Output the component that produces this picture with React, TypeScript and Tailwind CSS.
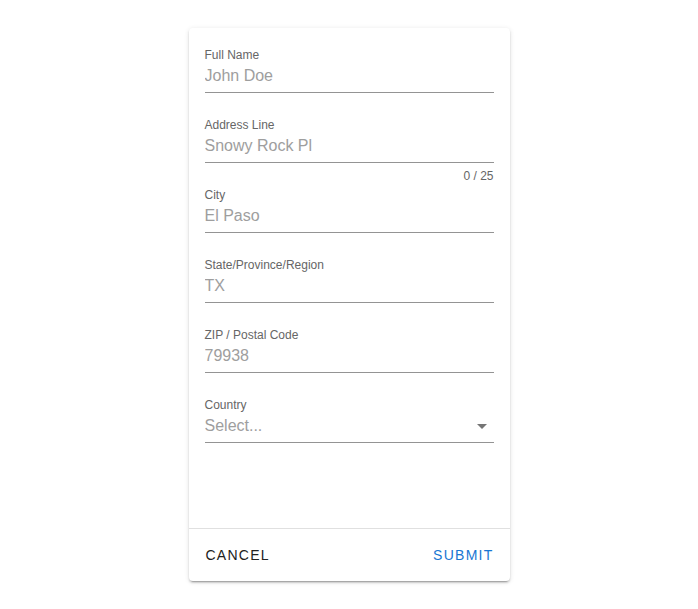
import React from "react";

function Field({ label, placeholder, counter, select }: { label: string; placeholder: string; counter?: string; select?: boolean }) {
  return (
    <div className="flex flex-col">
      <div className="h-[16px] text-[12px] leading-[18px] text-[#666666]">{label}</div>
      <div className="flex h-[31px] items-start border-b border-[#949494]">
        <input
          readOnly
          placeholder={placeholder}
          className="h-[28px] w-full min-w-0 flex-1 bg-transparent text-[16px] leading-[28px] text-[#212121] outline-none placeholder:text-[#9e9e9e]"
        />
        {select && (
          <svg width="24" height="24" viewBox="0 0 24 24" className="mt-[2px] shrink-0">
            <path d="M7,10L12,15L17,10H7Z" fill="#757575" />
          </svg>
        )}
      </div>
      <div className="flex h-[23px] justify-end">
        {counter && <div className="mt-[6px] text-[12px] leading-[14px] text-[#666666]">{counter}</div>}
      </div>
    </div>
  );
}

export default function App() {
  return (
    <div className="min-h-screen bg-white pt-[28px]" style={{ fontFamily: "'Liberation Sans', Arial, sans-serif" }}>
      <div className="mx-auto w-[321px] rounded-[4px] bg-white shadow-[0_3px_1px_-2px_rgba(0,0,0,0.2),0_2px_2px_0_rgba(0,0,0,0.14),0_1px_5px_0_rgba(0,0,0,0.12)]">
        <div className="h-[501px] border-b border-[#e0e0e0] px-[16px] pt-[18px]">
          <Field label="Full Name" placeholder="John Doe" />
          <Field label="Address Line" placeholder="Snowy Rock Pl" counter="0 / 25" />
          <Field label="City" placeholder="El Paso" />
          <Field label="State/Province/Region" placeholder="TX" />
          <Field label="ZIP / Postal Code" placeholder="79938" />
          <Field label="Country" placeholder="Select..." select />
        </div>
        <div className="flex h-[52px] items-center justify-between pl-[9px] pr-[8px]">
          <button className="h-[36px] rounded-[4px] px-[8px] text-[14px] font-normal uppercase tracking-[1.25px] text-[#212121]">Cancel</button>
          <button className="h-[36px] rounded-[4px] px-[8px] text-[14px] font-normal uppercase tracking-[1.25px] text-[#1976d2]">Submit</button>
        </div>
      </div>
    </div>
  );
}
